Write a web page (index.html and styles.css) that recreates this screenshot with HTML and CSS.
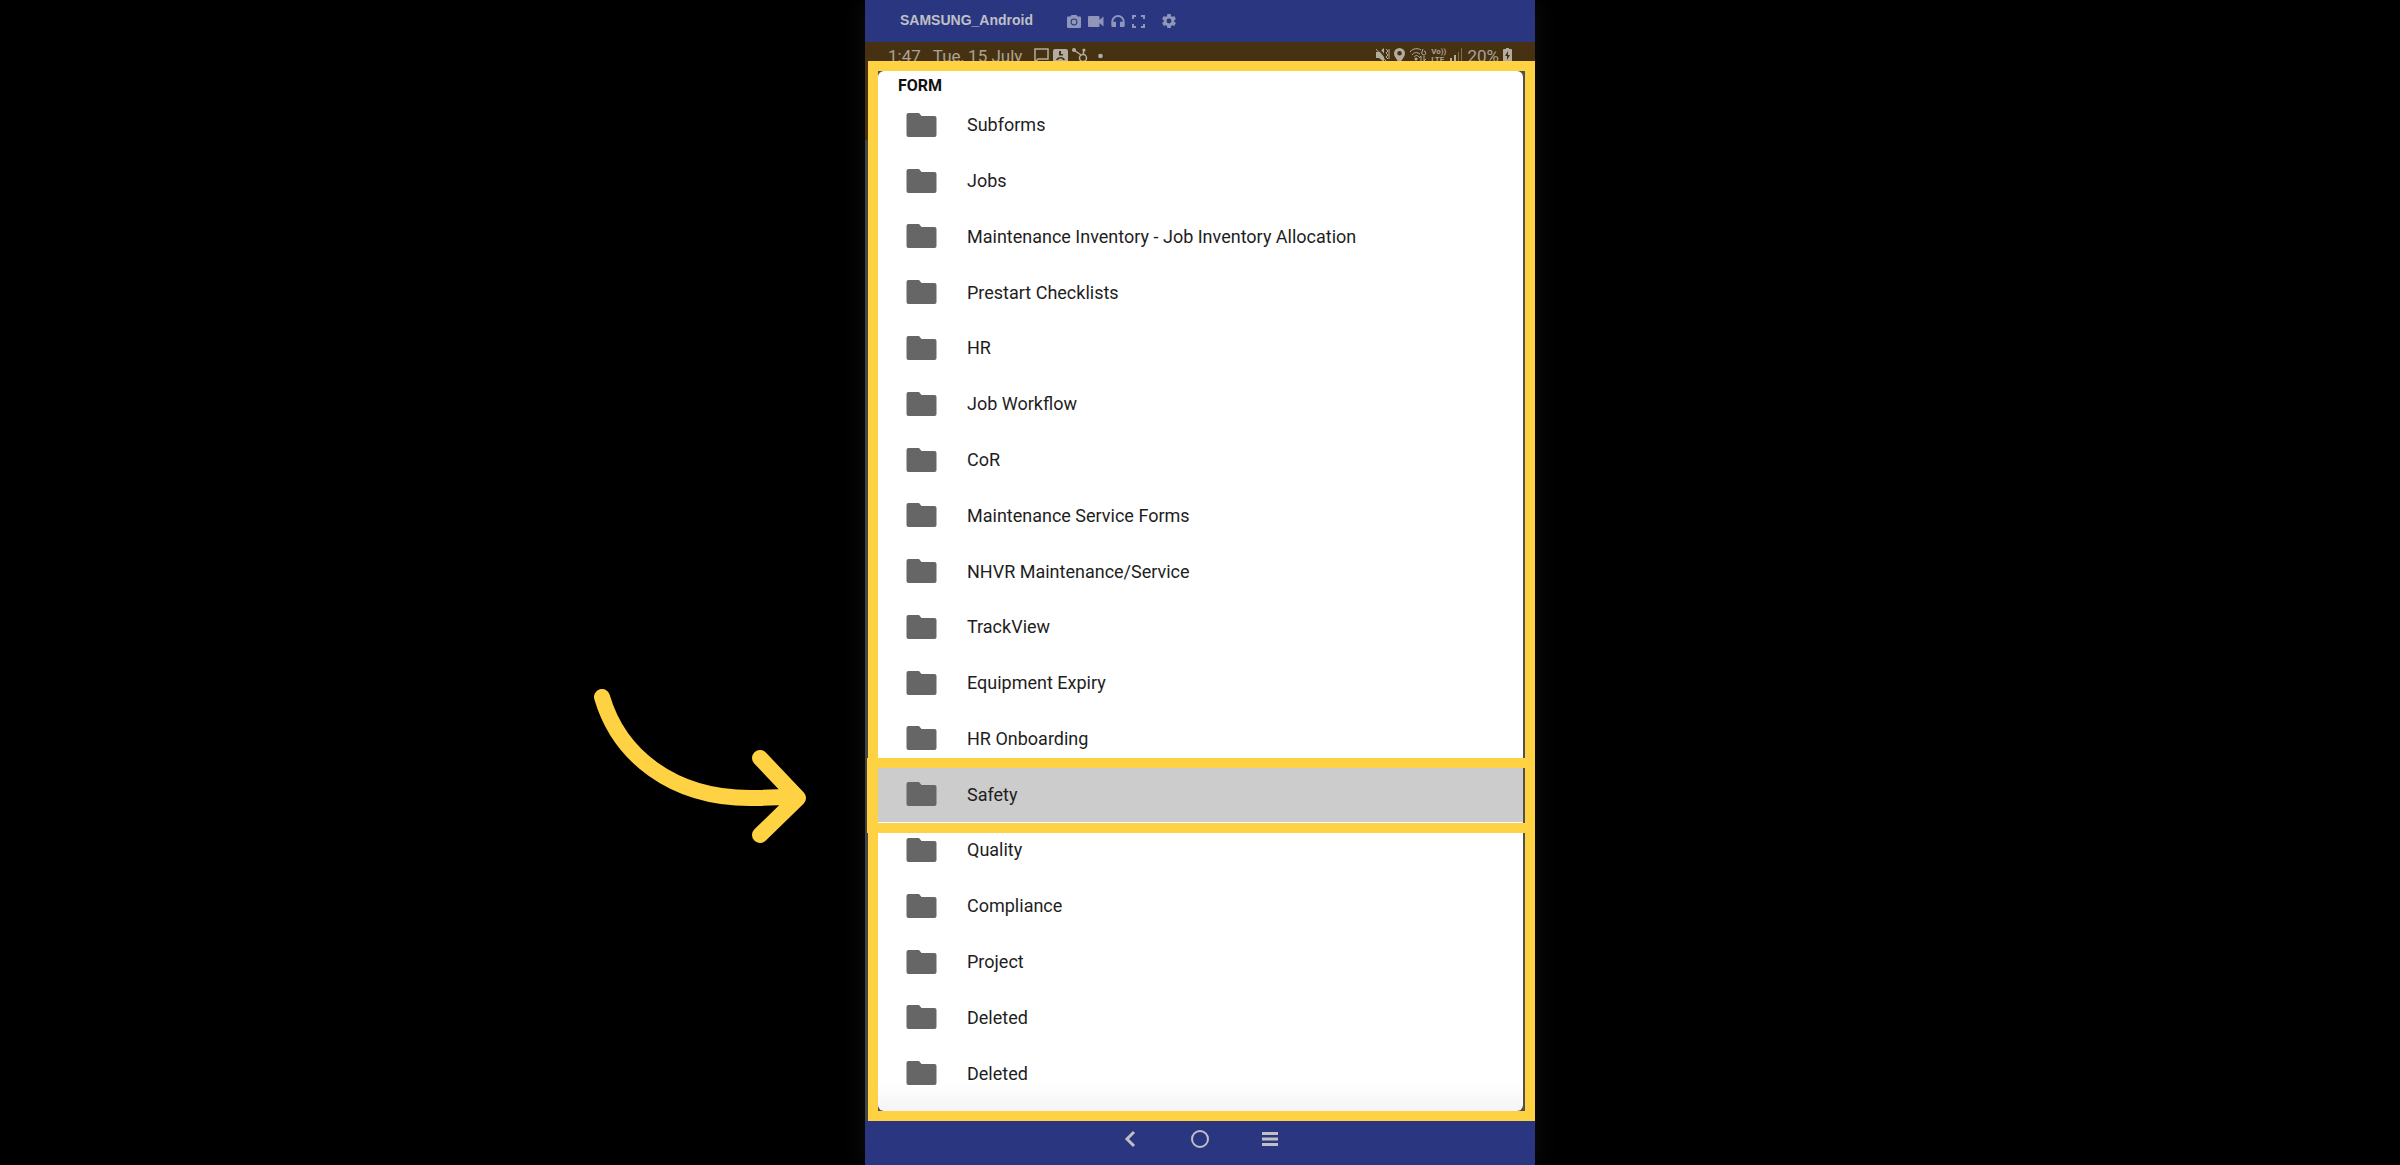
FILE: index.html
```html
<!DOCTYPE html>
<html lang="en">
<head>
    <meta charset="UTF-8">
    <meta name="viewport" content="width=device-width, initial-scale=1.0">
    <title>SAMSUNG_Android</title>
    <link rel="stylesheet" href="styles.css">
</head>
<body>
    <!-- Folder icon shared by all rows -->
    <svg class="defs" width="0" height="0" aria-hidden="true">
        <symbol id="folder" viewBox="0 0 30 24">
            <path d="M2 0h10.500l2.500 3H28a2 2 0 0 1 2 2v17a2 2 0 0 1-2 2H2a2 2 0 0 1-2-2V2a2 2 0 0 1 2-2z"/>
        </symbol>
    </svg>

    <div class="phone">
        <header class="title-bar">
            <span class="device-name">SAMSUNG_Android</span>
            <div class="tools">
                <button type="button" aria-label="Screenshot">
                    <svg width="14" height="13" viewBox="0 0 14 13"><path fill-rule="evenodd" d="M4.500 0h5l1.200 1.500H13a1 1 0 0 1 1 1V12a1 1 0 0 1-1 1H1a1 1 0 0 1-1-1V2.500a1 1 0 0 1 1-1h2.300zM7 3.600a3.400 3.400 0 1 0 0 6.800 3.400 3.400 0 0 0 0-6.800zm0 1a2.400 2.400 0 1 1 0 4.800 2.400 2.400 0 0 1 0-4.800z"/></svg>
                </button>
                <button type="button" aria-label="Record">
                    <svg width="16" height="11" viewBox="0 0 16 11"><path d="M1 0h9.500a1 1 0 0 1 1 1v3L15.500.500v10L11.500 7v3a1 1 0 0 1-1 1H1a1 1 0 0 1-1-1V1a1 1 0 0 1 1-1z"/></svg>
                </button>
                <button type="button" aria-label="Audio">
                    <svg width="14" height="13" viewBox="0 0 14 13"><path d="M7 0a6.700 6.700 0 0 0-6.700 6.700v3.800A1.500 1.500 0 0 0 1.800 12H5V6.800H2.200A4.800 4.800 0 0 1 7 2a4.800 4.800 0 0 1 4.800 4.800H9V12h3.200a1.500 1.500 0 0 0 1.500-1.500V6.700A6.700 6.700 0 0 0 7 0z"/></svg>
                </button>
                <button type="button" aria-label="Full screen">
                    <svg width="13" height="13" viewBox="0 0 13 13"><path class="line" d="M1 4V1h3M9 1h3v3M12 9v3H9M4 12H1V9"/></svg>
                </button>
                <button type="button" class="settings" aria-label="Settings">
                    <svg width="14" height="14" viewBox="2 2 20 20"><path d="M19.430 12.980c.04-.32.07-.64.07-.98s-.03-.66-.07-.98l2.110-1.650c.19-.15.24-.42.12-.64l-2-3.460c-.12-.22-.39-.3-.61-.22l-2.490 1c-.52-.4-1.080-.73-1.690-.98l-.38-2.650A.49.490 0 0 0 14 2h-4c-.25 0-.46.180-.49.420l-.38 2.650c-.61.250-1.170.590-1.690.980l-2.490-1c-.23-.09-.49 0-.61.220l-2 3.460c-.13.220-.07.490.120.640l2.110 1.650c-.04.320-.07.650-.07.980s.03.660.070.980l-2.110 1.650c-.19.150-.24.420-.12.640l2 3.460c.12.220.39.300.61.220l2.490-1c.52.400 1.080.730 1.690.980l.38 2.650c.03.240.24.420.49.420h4c.25 0 .46-.18.49-.42l.38-2.650c.61-.25 1.170-.59 1.690-.98l2.490 1c.23.090.49 0 .61-.22l2-3.460c.12-.22.07-.49-.12-.64zM12 15.500a3.500 3.500 0 1 1 0-7 3.500 3.500 0 0 1 0 7z"/></svg>
                </button>
            </div>
        </header>

        <div class="screen">
            <div class="status-bar">
                <span>1:47</span>
                <span>Tue, 15 July</span>
                <div class="notifications">
                    <svg width="15" height="16" viewBox="0 0 15 16"><path class="line" d="M1 1h13v10H4l-3 3z"/></svg>
                    <svg width="15" height="16" viewBox="0 0 15 16"><path fill-rule="evenodd" d="M2 1h11a2 2 0 0 1 2 2v13H0V3a2 2 0 0 1 2-2zM6 3v4.500h4V6H8V3zM3 12h2c1-2 4-2 5 0h2c-1-4-8-4-9 0z"/></svg>
                    <svg width="16" height="16" viewBox="0 0 16 16"><path class="line" d="M2 2l7 5M11.500 1v6"/><circle class="line" cx="11" cy="10" r="3.500"/><circle cx="2" cy="2" r="2"/><circle cx="12" cy="2" r="1.500"/></svg>
                    <svg class="dot" width="5" height="16" viewBox="0 0 5 16"><circle cx="2.500" cy="8" r="2.300"/></svg>
                </div>
                <div class="signals">
                    <svg width="14" height="14" viewBox="0 0 14 14"><path d="M0 4h3l5-4v14L3 10H0z"/><path class="slash" d="M2 0l10 12"/><path class="thin" d="M0 1l10 12M10 1l2 2-2 2 2 2-2 2 2 2M13 1v10"/></svg>
                    <svg width="11" height="15" viewBox="0 0 11 15"><path fill-rule="evenodd" d="M5.500 0A5.500 5.500 0 0 0 0 5.500C0 9 5.500 15 5.500 15S11 9 11 5.500A5.500 5.500 0 0 0 5.500 0zm0 3a2.300 2.300 0 1 1 0 4.600 2.300 2.300 0 0 1 0-4.600z"/></svg>
                    <svg width="18" height="14" viewBox="0 0 18 14"><path class="wave" d="M1 4c3-4 8-4 11-2M3 7c2-3 5-3 8-1M5 9c2-2 3-2 5 0M14 1l-1 3a2 2 0 1 0 2-1M12 13V8l-2 2M15 8v5l2-2"/><circle cx="7" cy="11" r="1.500"/></svg>
                    <span class="volte">Vo))<br>LTE</span>
                    <svg width="13" height="14" viewBox="0 0 13 14"><path d="M0 10h2v4H0zM4 7h2v7H4z"/><path opacity=".5" d="M8 4h1v10H8zM11 0h1v14h-1z"/></svg>
                    <span class="percent">20%</span>
                    <svg width="9" height="14" viewBox="0 0 9 14"><path fill-rule="evenodd" d="M3 0h3v1h2a1 1 0 0 1 1 1v12H0V2a1 1 0 0 1 1-1h2zM5 3L2 8h2v4l3-5H5z"/></svg>
                </div>
            </div>

            <main class="frame">
                <div class="panel">
                    <h1>FORM</h1>
                    <ul class="folders">
                        <li><button type="button"><svg><use href="#folder"/></svg>Subforms</button></li>
                        <li><button type="button"><svg><use href="#folder"/></svg>Jobs</button></li>
                        <li><button type="button"><svg><use href="#folder"/></svg>Maintenance Inventory - Job Inventory Allocation</button></li>
                        <li><button type="button"><svg><use href="#folder"/></svg>Prestart Checklists</button></li>
                        <li><button type="button"><svg><use href="#folder"/></svg>HR</button></li>
                        <li><button type="button"><svg><use href="#folder"/></svg>Job Workflow</button></li>
                        <li><button type="button"><svg><use href="#folder"/></svg>CoR</button></li>
                        <li><button type="button"><svg><use href="#folder"/></svg>Maintenance Service Forms</button></li>
                        <li><button type="button"><svg><use href="#folder"/></svg>NHVR Maintenance/Service</button></li>
                        <li><button type="button"><svg><use href="#folder"/></svg>TrackView</button></li>
                        <li><button type="button"><svg><use href="#folder"/></svg>Equipment Expiry</button></li>
                        <li><button type="button"><svg><use href="#folder"/></svg>HR Onboarding</button></li>
                        <li class="selected">
                            <button type="button"><svg><use href="#folder"/></svg>Safety</button>
                            <!-- Arrow pointing at the selected row -->
                            <svg class="arrow" width="212" height="154" viewBox="0 0 212 154" aria-hidden="true"><path d="M8 8C25 66 78 109 156 109Q178 109 200 107M166 69L204 109L166 146"/></svg>
                        </li>
                        <li><button type="button"><svg><use href="#folder"/></svg>Quality</button></li>
                        <li><button type="button"><svg><use href="#folder"/></svg>Compliance</button></li>
                        <li><button type="button"><svg><use href="#folder"/></svg>Project</button></li>
                        <li><button type="button"><svg><use href="#folder"/></svg>Deleted</button></li>
                        <li><button type="button"><svg><use href="#folder"/></svg>Deleted</button></li>
                    </ul>
                </div>
            </main>
        </div>

        <nav class="nav-bar">
            <button type="button" aria-label="Back">
                <svg width="18" height="18" viewBox="0 0 18 18"><path d="M13 2L6 9l7 7"/></svg>
            </button>
            <button type="button" aria-label="Home">
                <svg class="home" width="18" height="18" viewBox="0 0 18 18"><circle cx="9" cy="9" r="8"/></svg>
            </button>
            <button type="button" aria-label="Menu">
                <svg width="18" height="18" viewBox="0 0 18 18"><path d="M1 3.500h16M1 9h16M1 14.500h16"/></svg>
            </button>
        </nav>
    </div>
</body>
</html>
```
FILE: styles.css
```css
* {
    box-sizing: border-box;
}
body {
    margin: 0;
    background-color: #000;
    font-family: Roboto, sans-serif;
    display: flex;
    justify-content: center;
}
button {
    background: none;
    border: none;
    padding: 0;
    font: inherit;
    color: inherit;
    cursor: pointer;
}
svg {
    display: block;
    flex: none;
}
.defs {
    position: absolute;
}
.phone {
    width: 100%;
    max-width: 670px;
    min-height: 100vh;
    display: flex;
    flex-direction: column;
    box-shadow: 0 0 24px #111;
}

/* Title bar */
.title-bar {
    height: 42px;
    padding: 0 35px;
    display: flex;
    align-items: center;
    gap: 34px;
    background-color: #2a367f;
}
.device-name {
    font: bold 14px/20px "Liberation Sans", Arial, sans-serif;
    padding-bottom: 2px;
    color: #bfc0c8;
}
.tools {
    display: flex;
    align-items: center;
    gap: 7px;
    fill: #9096ba;
}
.tools .settings {
    margin-left: 10px;
}
.line {
    fill: none;
    stroke: #9096ba;
    stroke-width: 2;
}

/* Phone screen */
.screen {
    flex: 1;
    display: flex;
    flex-direction: column;
    background: linear-gradient(#463213 98px, #444 98px);
}
.status-bar {
    height: 19px;
    padding: 0 23px;
    display: flex;
    gap: 12px;
    line-height: 28px;
    font-size: 17px;
    color: #aaa294;
    fill: #b3aca0;
}
.status-bar .line {
    stroke: #b3aca0;
    stroke-width: 1.5;
}
.thin,
.wave {
    fill: none;
    stroke: #b3aca0;
}
.slash {
    stroke: #463213;
    stroke-width: 2;
}
.notifications,
.signals {
    display: flex;
    gap: 4px;
    padding-top: 6px;
}
.notifications .dot {
    margin-left: 6px;
}
.signals {
    margin-left: auto;
}
.volte {
    font-size: 8px;
    font-weight: bold;
    line-height: 8px;
}
.percent {
    line-height: 16px;
}
.frame {
    position: relative;
    flex: 1;
    display: flex;
    margin-left: 3px;
    padding-right: 2px;
    border: 10px solid #ffd243;
    background-color: #555046;
}
.panel {
    flex: 1;
    display: flex;
    flex-direction: column;
    padding-bottom: 10px;
    border-radius: 6px;
    background: linear-gradient(to top, #f4f4f4, #fff 28px);
}
.panel h1 {
    margin: 0;
    padding: 4px 20px 0;
    font-size: 16px;
    font-weight: 700;
    line-height: 22px;
    color: #111;
}

/* Folder list */
.folders {
    flex: 1;
    display: grid;
    grid-auto-rows: 1fr;
    margin: 0;
    padding: 0;
    list-style: none;
    font-size: 18px;
    color: #1e1e1e;
}
.folders li {
    display: flex;
}
.folders button {
    flex: 1;
    display: flex;
    align-items: center;
    gap: 30px;
    padding: 0 28px;
    text-align: left;
}
.folders button svg {
    width: 31px;
    height: 24px;
    fill: #666;
}
.folders .selected {
    position: relative;
    background-color: #ccc;
}
.selected::after {
    content: "";
    position: absolute;
    inset: -8px -12px -11px -11px;
    border: 10px solid #ffd243;
    pointer-events: none;
}
.arrow {
    position: absolute;
    right: calc(100% + 72px);
    bottom: -21px;
    fill: none;
    stroke: #ffd243;
    stroke-width: 16;
    stroke-linecap: round;
    stroke-linejoin: round;
}

/* Android navigation */
.nav-bar {
    height: 44px;
    padding-bottom: 8px;
    display: flex;
    justify-content: center;
    align-items: center;
    gap: 52px;
    background-color: #2a367f;
}
.nav-bar svg {
    fill: none;
    stroke: #bfbfc4;
    stroke-width: 3;
}
.nav-bar .home {
    stroke-width: 2;
}
```
